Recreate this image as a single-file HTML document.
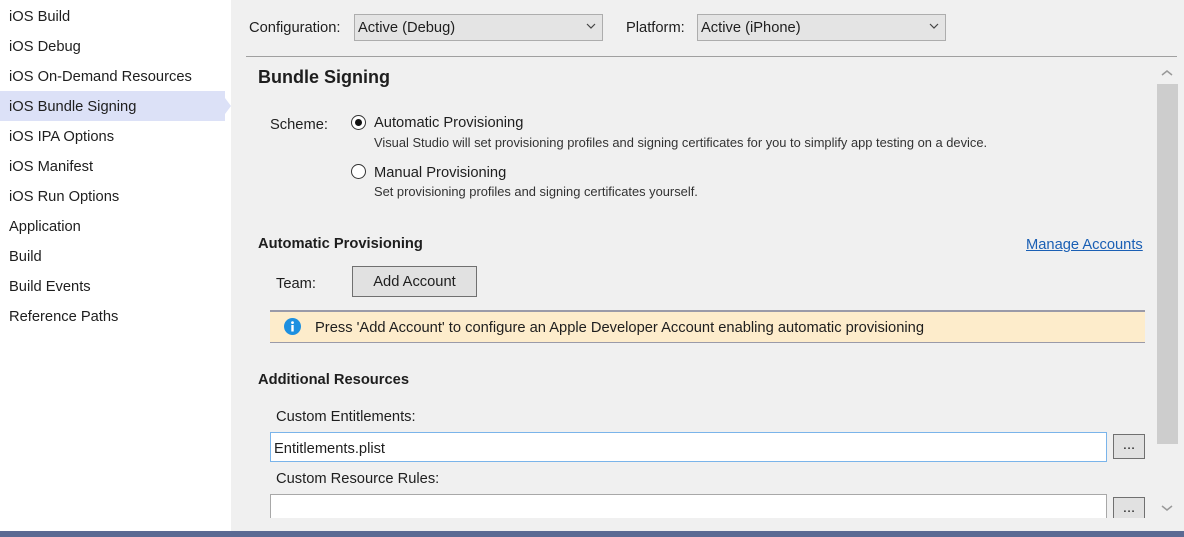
<!DOCTYPE html>
<html><head><meta charset="utf-8"><style>
*{box-sizing:border-box;margin:0;padding:0}
body{width:1184px;height:537px;overflow:hidden;background:#f0f0f0;font-family:"Liberation Sans",sans-serif;font-size:14.7px;color:#1e1e1e;position:relative}
.a{position:absolute;white-space:nowrap}
.tx{margin-top:1px}
#side{position:absolute;left:0;top:0;width:231px;height:531px;background:#fff}
#side .t{position:absolute;left:9px;font-size:14.7px;margin-top:1px}
.sel{position:absolute;left:0;top:91px;width:225px;height:30px;background:#dce1f7}
.arrow{position:absolute;left:225px;top:98px;width:0;height:0;border-top:8px solid transparent;border-bottom:8px solid transparent;border-left:6px solid #dce1f7}
.combo{position:absolute;height:27px;background:#e4e4e4;border:1px solid #adadad;padding:5px 3px;font-size:14.7px}
.chev{position:absolute;right:6px;top:5px}
.btn{position:absolute;background:#e1e1e1;border:1px solid #707070;text-align:center}
.radio{position:absolute;width:15px;height:15px;border:1px solid #333;border-radius:50%;background:#fff}
.small{font-size:12.9px;color:#333}
.inp{position:absolute;background:#fff;height:30px}
</style></head><body>
<div id="side">
<div class="sel"></div>
<div class="t" style="top:8px">iOS Build</div>
<div class="t" style="top:38px">iOS Debug</div>
<div class="t" style="top:68px">iOS On-Demand Resources</div>
<div class="t" style="top:98px">iOS Bundle Signing</div>
<div class="t" style="top:128px">iOS IPA Options</div>
<div class="t" style="top:158px">iOS Manifest</div>
<div class="t" style="top:188px">iOS Run Options</div>
<div class="t" style="top:218px">Application</div>
<div class="t" style="top:248px">Build</div>
<div class="t" style="top:278px">Build Events</div>
<div class="t" style="top:308px">Reference Paths</div>
</div>
<div class="arrow"></div>
<div class="a" style="left:249px;top:20px">Configuration:</div>
<div class="combo" style="left:354px;top:14px;width:249px">Active (Debug)<svg class="chev" width="10" height="12" viewBox="0 0 10 12"><path d="M1 4l4 4 4-4" fill="none" stroke="#444" stroke-width="1.2"/></svg></div>
<div class="a" style="left:626px;top:20px">Platform:</div>
<div class="combo" style="left:697px;top:14px;width:249px">Active (iPhone)<svg class="chev" width="10" height="12" viewBox="0 0 10 12"><path d="M1 4l4 4 4-4" fill="none" stroke="#444" stroke-width="1.2"/></svg></div>
<div class="a" style="left:246px;top:56px;width:931px;height:1px;background:#a0a0a0"></div>
<div class="a" style="left:258px;top:67px;font-size:18px;font-weight:bold">Bundle Signing</div>
<div class="a" style="left:270px;top:117px">Scheme:</div>
<div class="radio" style="left:351px;top:115px"><div style="position:absolute;left:3px;top:3px;width:7px;height:7px;border-radius:50%;background:#111"></div></div>
<div class="a" style="left:374px;top:115px">Automatic Provisioning</div>
<div class="a small" style="left:374px;top:135px">Visual Studio will set provisioning profiles and signing certificates for you to simplify app testing on a device.</div>
<div class="radio" style="left:351px;top:164px"></div>
<div class="a" style="left:374px;top:165px">Manual Provisioning</div>
<div class="a small" style="left:374px;top:184px">Set provisioning profiles and signing certificates yourself.</div>
<div class="a" style="left:258px;top:236px;font-weight:bold;font-size:14.7px">Automatic Provisioning</div>
<div class="a" style="left:1026px;top:237px;color:#1a5fb4;text-decoration:underline;font-size:14.7px">Manage Accounts</div>
<div class="a" style="left:276px;top:276px">Team:</div>
<div class="btn" style="left:352px;top:266px;width:125px;height:31px;line-height:31px">Add Account</div>
<div class="a" style="left:270px;top:310px;width:875px;height:33px;background:#fdeccb;border-top:2px solid #9a9aa8;border-bottom:1px solid #9a9aa8"></div>
<svg class="a" style="left:284px;top:318px" width="17" height="17" viewBox="0 0 17 17"><circle cx="8.5" cy="8.5" r="8.5" fill="#1e90e0"/><rect x="7.3" y="7" width="2.4" height="6.5" fill="#fff"/><circle cx="8.5" cy="4.6" r="1.4" fill="#fff"/></svg>
<div class="a" style="left:315px;top:320px">Press 'Add Account' to configure an Apple Developer Account enabling automatic provisioning</div>
<div class="a" style="left:258px;top:372px;font-weight:bold;font-size:14.7px">Additional Resources</div>
<div class="a" style="left:276px;top:409px">Custom Entitlements:</div>
<div class="inp" style="left:270px;top:432px;width:837px;border:1px solid #7ab4ea;padding:8px 3px">Entitlements.plist</div>
<div class="btn" style="left:1113px;top:434px;width:32px;height:25px;line-height:20px">...</div>
<div class="a" style="left:276px;top:471px">Custom Resource Rules:</div>
<div class="inp" style="left:270px;top:494px;width:837px;height:24px;border:1px solid #a8a8a8;border-bottom:none"></div>
<div class="btn" style="left:1113px;top:497px;width:32px;height:21px;line-height:20px;border-bottom:none">...</div>
<svg class="a" style="left:1161px;top:69px" width="12" height="8"><path d="M1 6l5-4 5 4" fill="none" stroke="#999" stroke-width="1.5"/></svg>
<div class="a" style="left:1157px;top:84px;width:21px;height:360px;background:#cdcdcd"></div>
<svg class="a" style="left:1161px;top:504px" width="12" height="8"><path d="M1 2l5 4 5-4" fill="none" stroke="#999" stroke-width="1.5"/></svg>
<div class="a" style="left:0;top:531px;width:1184px;height:6px;background:#5b6a93"></div>
</body></html>
